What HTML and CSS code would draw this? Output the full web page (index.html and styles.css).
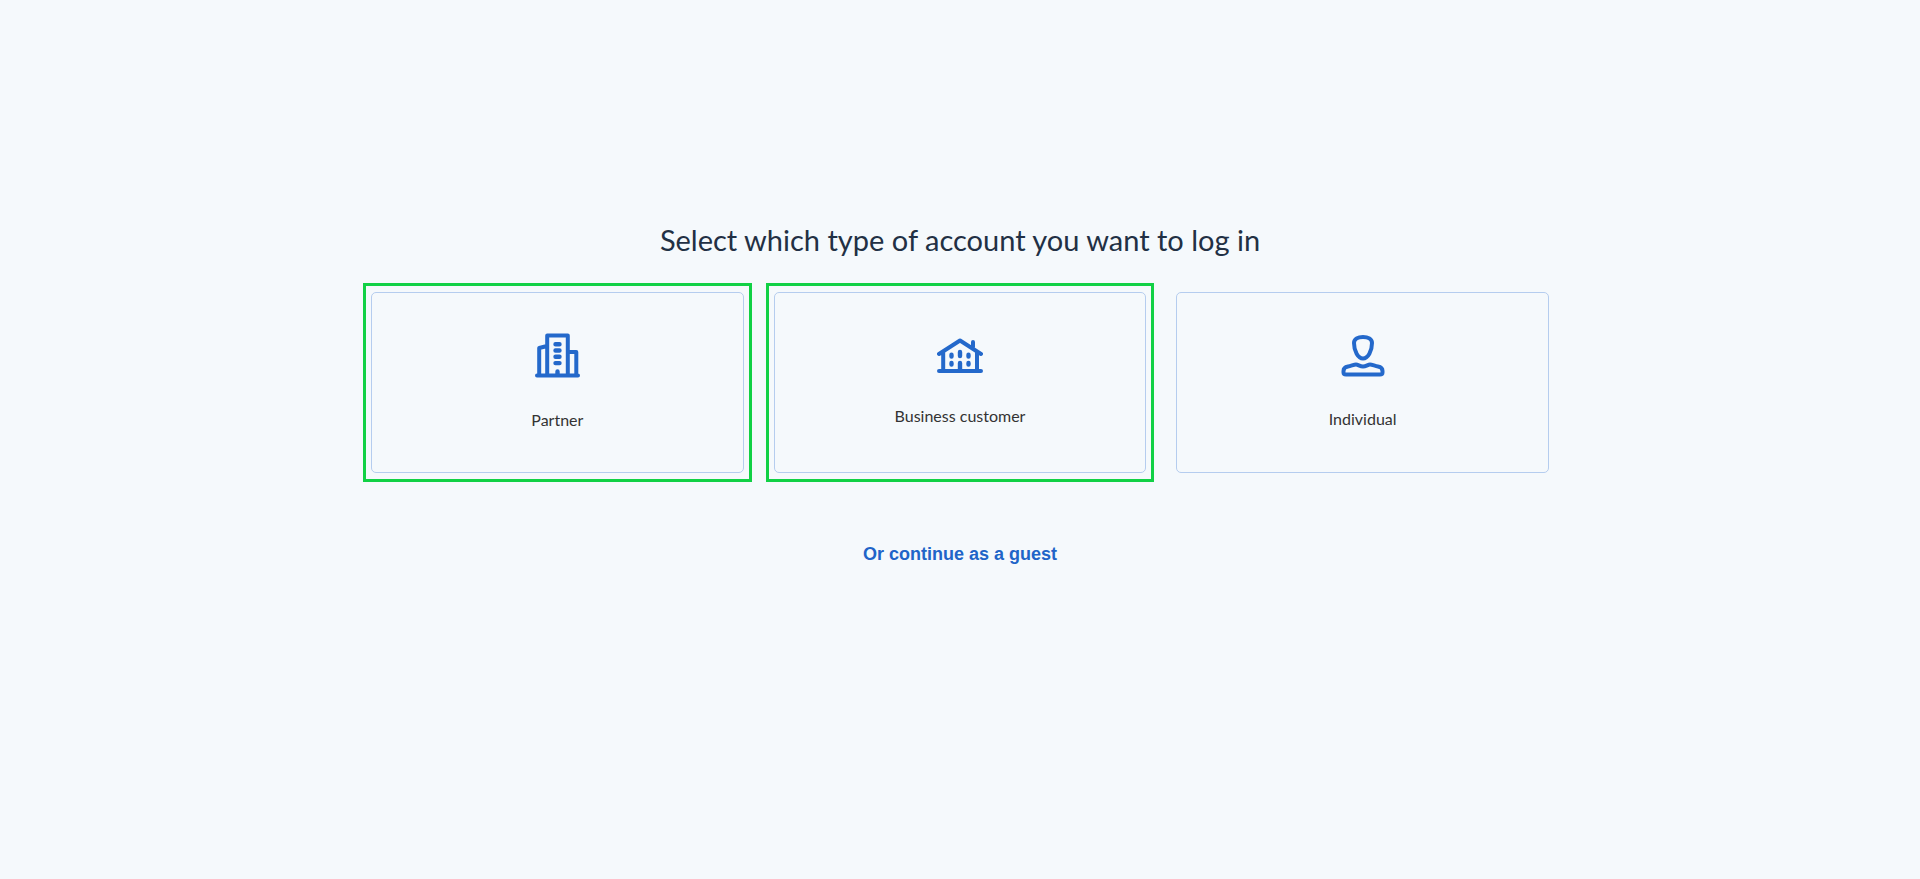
FILE: index.html
```html
<!DOCTYPE html>
<html lang="en">
<head>
<meta charset="utf-8">
<meta name="viewport" content="width=device-width, initial-scale=1">
<title>Select account type</title>
<link rel="stylesheet" href="styles.css">
</head>
<body>
<main class="login">
  <h1 class="title">Select which type of account you want to log in</h1>
  <div class="accounts">
    <button type="button" class="card highlighted">
      <svg class="icon" width="45" height="45" viewBox="0 0 45 45" aria-hidden="true">
        <path d="M2 42.500H43M12.200 41V2.500H32.800V41M4.200 41V15L12 13M33 19H41.300V41"/>
        <path d="M20.500 11.300H24.500M20.500 17.500H24.500M20.500 23.800H24.500M20.500 30.100H24.500M22.500 38.500V41" stroke-width="4.400"/>
      </svg>
      <span class="label">Partner</span>
    </button>
    <button type="button" class="card highlighted">
      <svg class="icon" width="46" height="37" viewBox="0 0 46 37" aria-hidden="true">
        <path d="M2 34H44M6.200 34V15M40 34V15M2 17L23 3.500L44 17M36 10V5"/>
        <path d="M14.500 17.700V19.500M23 15V19M31.500 17.700V19.500M14.500 26V27.500M23 26V33M31.500 26V27.500" stroke-width="4.400"/>
      </svg>
      <span class="label">Business customer</span>
    </button>
    <button type="button" class="card">
      <svg class="icon" width="44" height="42" viewBox="0 0 44 42" aria-hidden="true">
        <path d="M22 2C17 2 13 4 13 8C13 16 17 23.500 22 23.500C27 23.500 31 16 31 8C31 4 27 2 22 2Z"/>
        <path d="M15 29.500C13 29.500 10 31 7 31.500C4 32 2.500 33 2.500 36V37.500C2.500 39 3.500 39.500 5 39.500H39C40.500 39.500 41.500 39 41.500 37.500V36C41.500 33 40 32 37 31.500C34 31 31 29.500 29 29.500C27 29.500 25 31.500 22 31.500C19 31.500 17 29.500 15 29.500Z"/>
      </svg>
      <span class="label">Individual</span>
    </button>
  </div>
  <a class="guest" href="#">Or continue as a guest</a>
</main>
</body>
</html>
```
FILE: styles.css
```css
* {
  box-sizing: border-box;
}

body {
  margin: 0;
  background: #f5f9fc;
  color: #333;
  font-family: Lato, sans-serif;
}

.login {
  display: flex;
  flex-direction: column;
  align-items: center;
  max-width: 1210px;
  margin: 0 auto;
  padding: 220px 16px 40px;
}

.title {
  margin: 0 0 32px;
  color: #223044;
  font-size: 29px;
  font-weight: 400;
  line-height: 40px;
  text-align: center;
}

.accounts {
  display: grid;
  grid-template-columns: repeat(3, 1fr);
  gap: 30px;
  width: 100%;
}

.card {
  position: relative;
  display: flex;
  flex-direction: column;
  align-items: center;
  justify-content: center;
  gap: 30px;
  min-height: 181px;
  padding: 16px;
  border: 1px solid #b5cdef;
  border-radius: 5px;
  background: transparent;
  color: inherit;
  font: inherit;
  cursor: pointer;
}

.highlighted::after {
  content: "";
  position: absolute;
  inset: -10px -9px;
  border: 3px solid #11d145;
}

.icon {
  fill: none;
  stroke: #2469cb;
  stroke-width: 4;
  stroke-linecap: round;
  stroke-linejoin: round;
}

.label {
  font-size: 16px;
  line-height: 24px;
}

.guest {
  margin-top: 69px;
  color: #2064c8;
  font-family: "Liberation Sans", Arial, sans-serif;
  font-size: 18px;
  font-weight: 700;
  line-height: 24px;
  text-decoration: none;
}

@media (max-width: 700px) {
  .login {
    padding-top: 64px;
  }

  .accounts {
    grid-template-columns: 1fr;
  }
}
```
